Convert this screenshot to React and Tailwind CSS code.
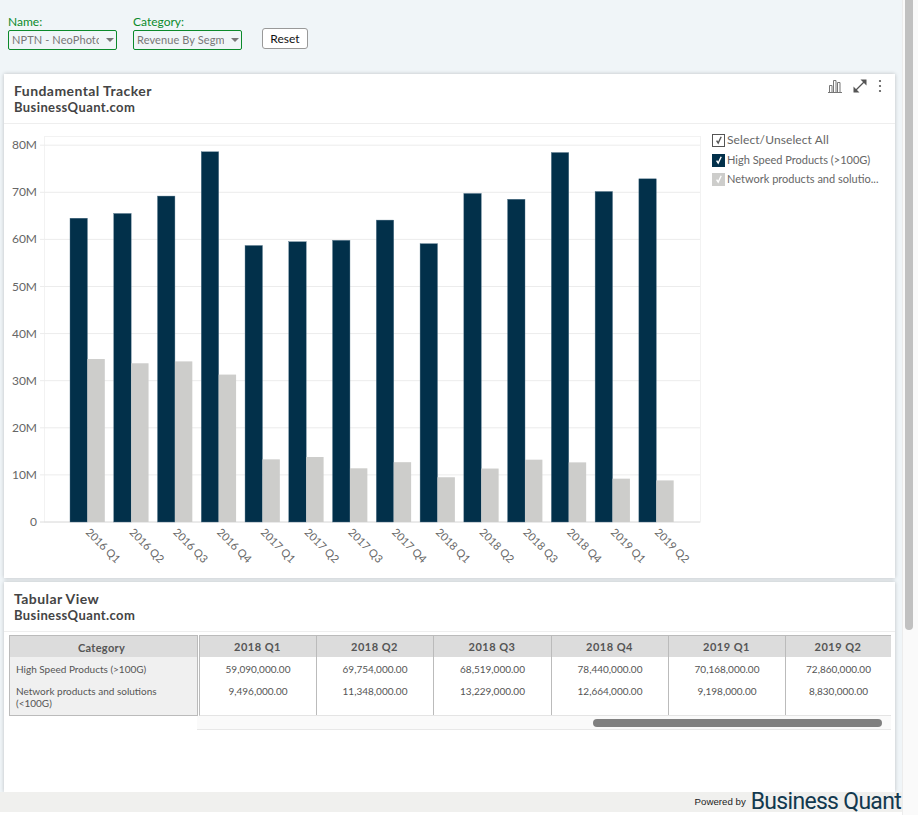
const quarters = ["2016 Q1","2016 Q2","2016 Q3","2016 Q4","2017 Q1","2017 Q2","2017 Q3","2017 Q4","2018 Q1","2018 Q2","2018 Q3","2018 Q4","2019 Q1","2019 Q2"];
const dark = [64.5,65.5,69.2,78.6,58.7,59.5,59.8,64.1,59.09,69.75,68.52,78.44,70.17,72.86];
const light = [34.6,33.7,34.1,31.3,13.3,13.8,11.4,12.7,9.5,11.35,13.23,12.66,9.2,8.83];
const ticks = [0,10,20,30,40,50,60,70,80];
const y0 = 522;
const unit = 4.71;
const font = { fontFamily: "Lato, sans-serif" };

const columns = [
  { q: "2018 Q1", a: "59,090,000.00", b: "9,496,000.00", w: "w-[117px]" },
  { q: "2018 Q2", a: "69,754,000.00", b: "11,348,000.00", w: "w-[117px]" },
  { q: "2018 Q3", a: "68,519,000.00", b: "13,229,000.00", w: "w-[118px]" },
  { q: "2018 Q4", a: "78,440,000.00", b: "12,664,000.00", w: "w-[117px]" },
  { q: "2019 Q1", a: "70,168,000.00", b: "9,198,000.00", w: "w-[117px]" },
  { q: "2019 Q2", a: "72,860,000.00", b: "8,830,000.00", w: "w-[105px]" },
];

function Select({ value, w }) {
  return (
    <div className={`flex h-[20px] items-center justify-between rounded-[2px] border border-[#0b8a2b] bg-[#f0f5f8] pl-[3px] pr-[2px] ${w}`}>
      <span className="w-[87px] overflow-hidden whitespace-nowrap text-[11px] tracking-[0.1px] text-[#777]">{value}</span>
      <span className="h-0 w-0 border-x-[4px] border-t-[4px] border-x-transparent border-t-[#777]" />
    </div>
  );
}

function Field({ label, value, w }) {
  return (
    <div className="flex flex-col">
      <span className="text-[12px] leading-[16px] text-[#0b8a2b]">{label}</span>
      <Select value={value} w={w} />
    </div>
  );
}

function Heading({ title }) {
  return (
    <div className="pl-[10px] pt-[9px] text-[#444]">
      <div className="text-[14px] font-bold leading-[16px] tracking-[0.42px]">{title}</div>
      <div className="text-[13px] font-bold leading-[16px] tracking-[0.4px]">BusinessQuant.com</div>
    </div>
  );
}

function Check({ color }) {
  return (
    <svg width="10" height="10" viewBox="0 0 10 10" fill="none" stroke={color} strokeWidth="1.4">
      <path d="M2.6 5.6 L4.2 8 L7.2 1.8" />
    </svg>
  );
}

function Chart() {
  return (
    <svg width="700" height="454" viewBox="4 124 700 454" className="shrink-0" style={font}>
      <rect x="44.5" y="136.5" width="656" height="385.5" fill="#fff" stroke="#f2f2f2" />
      {ticks.map((t) => {
        const y = y0 - t * unit;
        return (
          <g key={t}>
            <line x1="40" x2="700" y1={y} y2={y} stroke={t === 0 ? "#dcdcdc" : "#ececec"} />
            <text x="37" y={y + 4} textAnchor="end" fontSize="12" fill="#666">{t === 0 ? "0" : `${t}M`}</text>
          </g>
        );
      })}
      {quarters.map((q, i) => {
        const x = 70 + i * 43.76;
        return (
          <g key={q}>
            <rect x={x} y={y0 - dark[i] * unit} width="17.4" height={dark[i] * unit} fill="#02304a" stroke="#4f7187" strokeWidth="0.4" />
            <rect x={x + 17.4} y={y0 - light[i] * unit} width="17.4" height={light[i] * unit} fill="#cdcdcb" />
            <text transform={`translate(${x + 15} 533) rotate(45)`} fontSize="11" fill="#666">{q}</text>
          </g>
        );
      })}
    </svg>
  );
}

function Legend() {
  return (
    <div className="flex flex-col pl-[8px] pt-[8px] text-[#666]">
      <div className="flex h-[16px] items-center gap-[2px] text-[12px] tracking-[0.1px]">
        <span className="flex h-[13px] w-[13px] items-center justify-center border border-[#555]"><Check color="#555" /></span>
        <span>Select/Unselect All</span>
      </div>
      <div className="mt-[4px] flex h-[16px] items-center gap-[2px] text-[11px]">
        <span className="flex h-[13px] w-[13px] items-center justify-center bg-[#02304a]"><Check color="#fff" /></span>
        <span>High Speed Products (&gt;100G)</span>
      </div>
      <div className="mt-[3px] flex h-[16px] items-center gap-[2px] text-[11px]">
        <span className="flex h-[13px] w-[13px] items-center justify-center bg-[#cdcdcb]"><Check color="#fff" /></span>
        <span>Network products and solutio...</span>
      </div>
    </div>
  );
}

function Toolbar() {
  return (
    <div className="flex items-start pr-[13px] pt-[5px]">
      <svg width="14" height="14" viewBox="0 0 14 14" fill="none" stroke="#777" strokeWidth="1">
        <path d="M0 13.5 H14 M1.5 13 V6.5 H4 V13 M5.5 13 V1.5 H8 V13 M9.5 13 V3.5 H12 V13" />
      </svg>
      <svg className="ml-[11px]" width="14" height="14" viewBox="0 0 14 14" fill="none" stroke="#555" strokeWidth="1.3">
        <path d="M2 12 L12 2" />
        <path d="M7.5 0.5 H13.5 V6.5 Z M0.5 7.5 V13.5 H6.5 Z" fill="#555" stroke="none" />
      </svg>
      <svg className="ml-[11px]" width="4" height="14" viewBox="0 0 4 14" fill="#555">
        <circle cx="2" cy="2" r="1.1" />
        <circle cx="2" cy="7" r="1.1" />
        <circle cx="2" cy="12" r="1.1" />
      </svg>
    </div>
  );
}

function Table() {
  return (
    <div className="flex pl-[5px] pt-[3px] text-[#555]">
      <div className="w-[189px] shrink-0 self-start border border-[#bbb] bg-[#f0f0f0] text-[10px]">
        <div className="flex h-[21px] items-center justify-center bg-[#dcdcdc] pr-[4px] pt-[3px] text-[11px] font-bold tracking-[0.3px]">Category</div>
        <div className="flex h-[24px] items-center pl-[6px]">High Speed Products (&gt;100G)</div>
        <div className="flex h-[34px] items-start pl-[6px] pr-[4px] pt-[4px] leading-[12px]">Network products and solutions (&lt;100G)</div>
      </div>
      <div className="ml-[1px] flex flex-col">
        <div className="flex border-b border-[#e4e4e4] border-l border-l-[#bbb]">
          {columns.map((c, i) => (
            <div key={c.q} className={`flex flex-col text-center text-[10px] ${c.w} ${i < 5 ? "border-r border-[#bbb]" : ""}`}>
              <div className="flex h-[22px] items-center justify-center border-t border-[#bbb] bg-[#dcdcdc] pr-[1px] pt-[2px] text-[11px] font-bold tracking-[0.5px]">{c.q}</div>
              <div className="flex h-[24px] items-center justify-center">{c.a}</div>
              <div className="h-[34px] pt-[4px] leading-[12px]">{c.b}</div>
            </div>
          ))}
        </div>
        <div className="-ml-[2px] flex h-[14px] items-center justify-end border-b border-[#e8e8e8] bg-[#fafafa] pr-[9px]">
          <div className="h-[8px] w-[289px] rounded-full bg-[#808080]" />
        </div>
      </div>
    </div>
  );
}

export default function App() {
  return (
    <div className="flex h-[815px] w-[918px] overflow-hidden bg-white" style={font}>
      <div className="flex h-[812px] w-[902px] flex-col overflow-hidden bg-[#f0f5f8]">
        <div className="flex h-[74px] shrink-0 items-start pl-[8px] pt-[14px]">
          <Field label="Name:" value="NPTN - NeoPhotonics" w="w-[109px]" />
          <div className="ml-[16px]"><Field label="Category:" value="Revenue By Segment" w="w-[109px]" /></div>
          <button className="ml-[20px] mt-[14px] h-[21px] w-[46px] rounded-[3px] border border-[#999] bg-white text-[12px] text-[#111]">Reset</button>
        </div>

        <div className="ml-[4px] h-[504px] w-[891px] shrink-0 bg-white shadow-[0_0_4px_rgba(0,0,0,0.22)]">
          <div className="flex h-[50px] justify-between border-b border-[#eee]">
            <Heading title="Fundamental Tracker" />
            <Toolbar />
          </div>
          <div className="flex">
            <Chart />
            <Legend />
          </div>
        </div>

        <div className="ml-[4px] mt-[4px] min-h-0 w-[891px] flex-1 bg-white shadow-[0_0_4px_rgba(0,0,0,0.22)]">
          <div className="h-[50px] border-b border-[#eee]">
            <Heading title="Tabular View" />
          </div>
          <Table />
        </div>

        <div className="flex h-[20px] shrink-0 items-center justify-end gap-[5px] bg-[#f0f0ee] pr-[1px]">
          <span className="text-[9.7px] text-[#222]" style={{ fontFamily: "'Liberation Sans', sans-serif" }}>Powered by</span>
          <span className="whitespace-nowrap text-[23px] leading-[24px] tracking-[-0.7px] text-[#12394f]" style={{ fontFamily: "Roboto, sans-serif" }}>Business Quant</span>
        </div>
      </div>

      <div className="w-[16px] border-l border-[#ececec] bg-[#fafafa] pl-[2px]">
        <div className="h-[630px] w-[8px] rounded-b-[4px] bg-[#c1c1c1]" />
      </div>
    </div>
  );
}
